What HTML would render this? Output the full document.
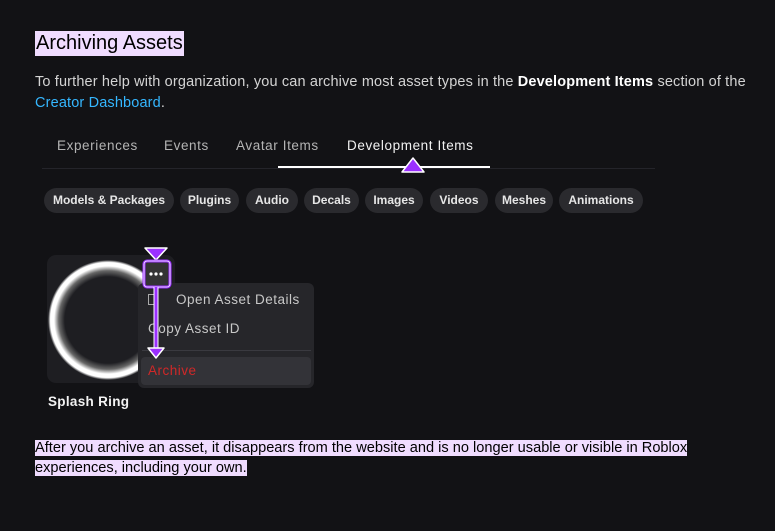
<!DOCTYPE html>
<html><head><style>
body{margin:0;width:775px;height:531px;background:#121215;font-family:"Liberation Sans",sans-serif;position:relative;overflow:hidden}
.a{position:absolute;white-space:nowrap}
.hl{background:#f0dcff;color:#000}
.pill{position:absolute;top:188px;height:25px;line-height:25px;border-radius:13px;background:#2a2a2e;color:#e6e6e6;font-size:12px;font-weight:bold;text-align:center}
.tab{position:absolute;top:138px;font-size:13.5px;color:#b4b4b4;letter-spacing:0.6px}
</style></head><body>
<div class="a hl" style="left:35px;top:31px;height:25px;line-height:25px;font-size:20px;padding:0 1px">Archiving Assets</div>
<div class="a" style="left:35px;top:72px;font-size:14.5px;color:#d4d4d4;line-height:21px;letter-spacing:0.15px">To further help with organization, you can archive most asset types in the <b style="color:#fff">Development Items</b> section of the<br><span style="color:#35b7ff">Creator Dashboard</span>.</div>
<div class="tab" style="left:57px">Experiences</div>
<div class="tab" style="left:164px">Events</div>
<div class="tab" style="left:236px">Avatar Items</div>
<div class="tab" style="left:347px;color:#f2f2f2">Development Items</div>
<div class="a" style="left:42px;top:168px;width:613px;height:1px;background:#24242a"></div>
<div class="a" style="left:278px;top:166px;width:212px;height:2px;background:#fff"></div>
<svg class="a" style="left:400px;top:156px" width="26" height="18"><polygon points="13,2 24,16 2,16" fill="#9b30ff" stroke="#fff" stroke-width="1.5" stroke-linejoin="round"/></svg>
<div class="pill" style="left:44px;width:130px">Models &amp; Packages</div>
<div class="pill" style="left:180px;width:59px">Plugins</div>
<div class="pill" style="left:246px;width:52px">Audio</div>
<div class="pill" style="left:304px;width:55px">Decals</div>
<div class="pill" style="left:365px;width:58px">Images</div>
<div class="pill" style="left:430px;width:58px">Videos</div>
<div class="pill" style="left:495px;width:58px">Meshes</div>
<div class="pill" style="left:559px;width:84px">Animations</div>
<div class="a" style="left:47px;top:255px;width:128px;height:128px;border-radius:9px;background:#1e1e22;overflow:hidden">
<svg width="128" height="128"><defs><radialGradient id="g" cx="61" cy="65" r="60" gradientUnits="userSpaceOnUse"><stop offset="0.72" stop-color="#1e1e22"/><stop offset="0.82" stop-color="#666"/><stop offset="0.9" stop-color="#fff"/><stop offset="0.96" stop-color="#fff"/><stop offset="1" stop-color="#1e1e22"/></radialGradient></defs><circle cx="61" cy="65" r="60" fill="url(#g)"/></svg></div>
<div class="a" style="left:138px;top:283px;width:176px;height:105px;border-radius:6px;background:#26262a"></div>
<div class="a" style="left:148px;top:292px;font-size:13.5px;color:#c8c8c8;letter-spacing:0.5px"><span style="display:inline-block;width:10px;height:11px;border:1.5px solid #aaa;box-sizing:border-box;vertical-align:-1px;margin-right:18px"></span>Open Asset Details</div>
<div class="a" style="left:148px;top:321px;font-size:13.5px;color:#c8c8c8;letter-spacing:0.5px">Copy Asset ID</div>
<div class="a" style="left:142px;top:350px;width:169px;height:1px;background:#3a3a40"></div>
<div class="a" style="left:141px;top:357px;width:170px;height:28px;border-radius:4px;background:#333338"></div>
<div class="a" style="left:148px;top:363px;font-size:13.5px;color:#d02828;letter-spacing:0.5px">Archive</div>
<svg class="a" style="left:140px;top:245px" width="40" height="120">
<polygon points="5,3 27,3 16,15" fill="#9b30ff" stroke="#fff" stroke-width="1.5" stroke-linejoin="round"/>
<rect x="4" y="16" width="26" height="26" rx="3" fill="#333" stroke="#9b30ff" stroke-width="3"/>
<rect x="4" y="16" width="26" height="26" rx="3" fill="none" stroke="#fff" stroke-width="0.8"/>
<circle cx="11" cy="29" r="1.6" fill="#fff"/><circle cx="16" cy="29" r="1.6" fill="#fff"/><circle cx="21" cy="29" r="1.6" fill="#fff"/>
<rect x="13.5" y="42" width="5" height="62" fill="#fff"/><rect x="14.5" y="42" width="3" height="62" fill="#9b30ff"/>
<polygon points="8,103 24,103 16,113" fill="#9b30ff" stroke="#fff" stroke-width="1.5" stroke-linejoin="round"/>
</svg>
<div class="a" style="left:48px;top:394px;font-size:13.5px;font-weight:bold;color:#f2f2f2;letter-spacing:0.3px">Splash Ring</div>
<div class="a" style="left:35px;top:438px;font-size:14.6px;line-height:20px;color:#000"><span class="hl">After you archive an asset, it disappears from the website and is no longer usable or visible in Roblox</span><br><span class="hl">experiences, including your own.</span></div>
</body></html>
